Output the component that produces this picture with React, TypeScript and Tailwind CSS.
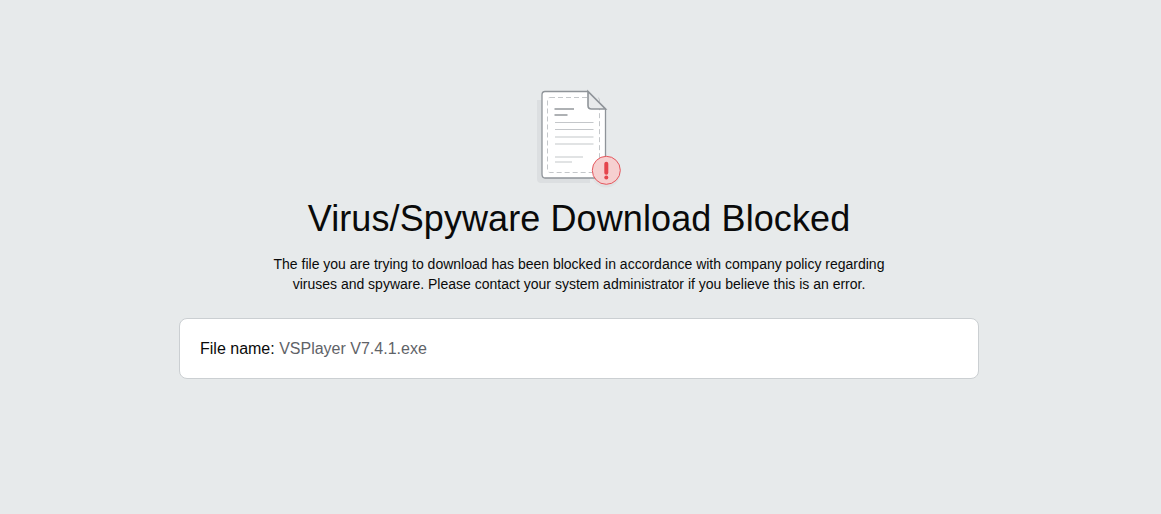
function BlockedFileIcon() {
  return (
    <svg className="mr-[3px]" width="115" height="115" viewBox="0 0 115 115" fill="none">
      {/* shadow */}
      <path d="M17 20 H22 V94 H70 V103 H21 Q17 103 17 99 Z" fill="#dcdfe1" />
      <circle cx="86" cy="93" r="14.5" fill="#dfe2e3" />
      {/* page */}
      <path
        d="M25 11.5 H68 L85.5 29 V94 Q85.5 98 81.5 98 H25 Q22 98 22 94 V15 Q22 11.5 25 11.5 Z"
        fill="#fff"
        stroke="#8f9499"
        strokeWidth="1.3"
      />
      <rect
        x="27.5"
        y="17.5"
        width="52"
        height="75"
        rx="2.5"
        stroke="#c4c7ca"
        strokeWidth="1"
        strokeDasharray="5 3"
      />
      {/* folded corner */}
      <path d="M68 11.5 L85.5 29 H71.5 Q68 29 68 25.5 Z" fill="#e8eaeb" stroke="#8f9499" strokeWidth="1.6" />
      {/* text lines */}
      <path d="M34.5 29 H54" stroke="#9a9ea2" strokeWidth="1.6" />
      <path d="M34.5 35 H47.5" stroke="#9a9ea2" strokeWidth="1.6" />
      <path
        d="M35 42.5 H73.5 M35 49.5 H73.5 M35 57 H73.5 M35 64 H73.5 M35 77 H63 M35 82 H52"
        stroke="#c4c7ca"
        strokeWidth="1.2"
      />
      {/* alert badge */}
      <circle cx="86.3" cy="90.3" r="14" fill="#f6d0d0" stroke="#e5575d" strokeWidth="1" />
      <rect x="84.3" y="81.7" width="4" height="13" rx="2" fill="#e5454c" />
      <circle cx="86.3" cy="97.4" r="2" fill="#e5454c" />
    </svg>
  );
}

export default function App() {
  return (
    <div className="min-h-[514px] bg-[#e7eaeb] font-['Liberation_Sans',Arial,sans-serif] text-[#0a0a0a]">
      <main className="flex flex-col items-center pr-[3px] pt-20">
        <BlockedFileIcon />
        <h1 className="mt-1 text-[36px] leading-[40px] tracking-[0.1px]">Virus/Spyware Download Blocked</h1>
        <p className="mt-[15px] w-[640px] text-center text-sm leading-5">
          The file you are trying to download has been blocked in accordance with company policy regarding viruses and
          spyware. Please contact your system administrator if you believe this is an error.
        </p>
        <div className="mt-6 w-[800px] rounded-lg border border-[#cbcfd2] bg-white px-5 py-5 text-base leading-[19px]">
          File name: <span className="text-[#5f6368]">VSPlayer V7.4.1.exe</span>
        </div>
      </main>
    </div>
  );
}
